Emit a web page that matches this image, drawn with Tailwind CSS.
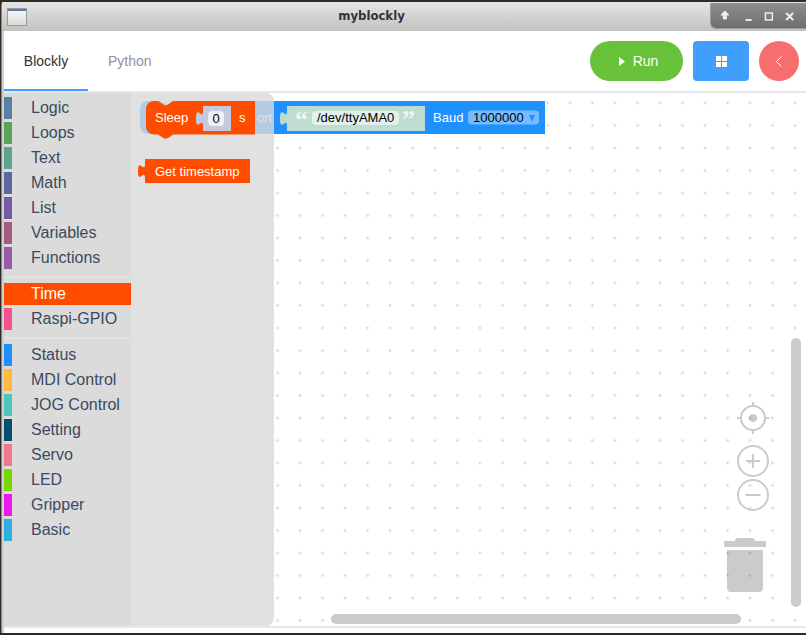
<!DOCTYPE html>
<html lang="en">
<head>
  <meta charset="UTF-8" />
  <title>myblockly</title>
  <script src="https://cdn.jsdelivr.net/npm/@tailwindcss/browser@4"></script>
</head>
<body class="w-[806px] h-[635px] overflow-hidden bg-[#2e2a26] font-['Liberation_Sans',sans-serif]">
  <div class="ml-[1px] mt-[2px] w-[805px] h-[631px] flex flex-col bg-[#d0d0d0] rounded-t-[4px] relative border-l border-[#888]">
    <!-- title bar -->
    <div class="h-[29px] shrink-0 flex items-center justify-center bg-gradient-to-b from-[#e4e4e4] to-[#c2c2c2] relative">
      <div class="absolute left-[5px] top-[6px] w-[20px] h-[18px] border border-[#9a9a9a] bg-gradient-to-b from-[#fafafa] to-[#dcdcd4]">
        <div class="h-[2px] bg-[#5a7aa8]"></div>
      </div>
      <span class="text-[11.7px] font-bold text-[#333] font-['DejaVu_Sans',sans-serif] ml-[-65px]">myblockly</span>
      <div class="absolute right-0 top-[1px] w-[96px] h-[26px] rounded-bl-[6px] bg-gradient-to-b from-[#8e8e8e] to-[#6e6e6e] border-l border-b border-[#9c9c9c] flex items-center justify-end text-white">
        <svg width="96" height="26" viewBox="0 0 96 26" fill="none" stroke="#eee" stroke-width="2">
          <path d="M14 8l-4 4h2.500v4h3v-4H18z" fill="#eee" stroke-width="1"/>
          <path d="M35 17h6"/>
          <rect x="55" y="10" width="7" height="7" stroke-width="1.500"/>
          <path d="M76 10l7 7M83 10l-7 7"/>
        </svg>
      </div>
    </div>
    <div class="flex-1 ml-[2px] mr-0 bg-white flex flex-col min-h-0">
      <!-- tabs and actions -->
      <div class="h-[60px] shrink-0 flex items-center relative">
        <div class="h-full w-[84px] pt-[2px] flex items-center justify-center text-sm text-[#303133] border-b-2 border-[#409eff]">Blockly</div>
        <div class="ml-[20px] text-sm text-[#909399]">Python</div>
        <div class="ml-auto mr-[7px] flex items-center gap-[10px]">
          <button class="w-[93px] h-[40px] pl-[4px] rounded-full bg-[#67c23a] text-white text-sm flex items-center justify-center gap-[8px]">
            <svg width="6" height="9" viewBox="0 0 6 9"><path d="M0 0l6 4.500-6 4.500z" fill="#fff"/></svg>
            Run
          </button>
          <button class="w-[56px] h-[40px] rounded-[4px] bg-[#409eff] flex items-center justify-center">
            <svg width="11" height="11" viewBox="0 0 11 11" fill="#fff"><rect width="5" height="5"/><rect x="6" width="5" height="5"/><rect y="6" width="5" height="5"/><rect x="6" y="6" width="5" height="5"/></svg>
          </button>
          <button class="w-[40px] h-[40px] rounded-full bg-[#f76e6e] flex items-center justify-center">
            <svg width="6" height="11" viewBox="0 0 6 11" fill="none" stroke="#fff"><path d="M5.500 .5l-5 5 5 5"/></svg>
          </button>
        </div>
      </div>
      <div class="h-[2px] shrink-0 bg-[#e4e7ed]"></div>
      <!-- editor -->
      <div class="flex-1 flex min-h-0 relative">
        <div class="w-[127px] shrink-0 bg-[#dbdbdb] pt-[2px] text-base text-[#3a4a60] relative z-10">
          <div class="h-[25px] flex items-center"><span class="w-[8px] h-[22px] bg-[#5b80a5]"></span><span class="ml-[19px]">Logic</span></div>
          <div class="h-[25px] flex items-center"><span class="w-[8px] h-[22px] bg-[#5ba55b]"></span><span class="ml-[19px]">Loops</span></div>
          <div class="h-[25px] flex items-center"><span class="w-[8px] h-[22px] bg-[#5ba58c]"></span><span class="ml-[19px]">Text</span></div>
          <div class="h-[25px] flex items-center"><span class="w-[8px] h-[22px] bg-[#5b67a5]"></span><span class="ml-[19px]">Math</span></div>
          <div class="h-[25px] flex items-center"><span class="w-[8px] h-[22px] bg-[#745ba5]"></span><span class="ml-[19px]">List</span></div>
          <div class="h-[25px] flex items-center"><span class="w-[8px] h-[22px] bg-[#a55b80]"></span><span class="ml-[19px]">Variables</span></div>
          <div class="h-[25px] flex items-center"><span class="w-[8px] h-[22px] bg-[#995ba5]"></span><span class="ml-[19px]">Functions</span></div>
          <div class="h-[11px] pt-[6px]"><div class="w-full h-[2px] bg-[#e3e3e3]"></div></div>
          <div class="h-[25px] flex items-center"><div class="w-full h-[22px] bg-[#ff4d00] text-white pl-[27px] leading-[22px]">Time</div></div>
          <div class="h-[25px] flex items-center"><span class="w-[8px] h-[22px] bg-[#f5528f]"></span><span class="ml-[19px]">Raspi-GPIO</span></div>
          <div class="h-[11px] pt-[6px]"><div class="w-full h-[2px] bg-[#e3e3e3]"></div></div>
          <div class="h-[25px] flex items-center"><span class="w-[8px] h-[22px] bg-[#1e90ff]"></span><span class="ml-[19px]">Status</span></div>
          <div class="h-[25px] flex items-center"><span class="w-[8px] h-[22px] bg-[#ffb940]"></span><span class="ml-[19px]">MDI Control</span></div>
          <div class="h-[25px] flex items-center"><span class="w-[8px] h-[22px] bg-[#4fc4b8]"></span><span class="ml-[19px]">JOG Control</span></div>
          <div class="h-[25px] flex items-center"><span class="w-[8px] h-[22px] bg-[#05506b]"></span><span class="ml-[19px]">Setting</span></div>
          <div class="h-[25px] flex items-center"><span class="w-[8px] h-[22px] bg-[#f0788a]"></span><span class="ml-[19px]">Servo</span></div>
          <div class="h-[25px] flex items-center"><span class="w-[8px] h-[22px] bg-[#77d800]"></span><span class="ml-[19px]">LED</span></div>
          <div class="h-[25px] flex items-center"><span class="w-[8px] h-[22px] bg-[#ee16ee]"></span><span class="ml-[19px]">Gripper</span></div>
          <div class="h-[25px] flex items-center"><span class="w-[8px] h-[22px] bg-[#2eaee2]"></span><span class="ml-[19px]">Basic</span></div>
        </div>
        <!-- workspace canvas: coordinates below are relative to x=131, y=93 -->
        <div class="flex-1 relative overflow-hidden">
          <svg class="absolute inset-0" width="675" height="534" font-family="Liberation Sans, sans-serif" font-size="13">
            <defs>
              <pattern id="grid" width="22.5" height="22.5" patternUnits="userSpaceOnUse" x="0" y="-1.5">
                <path d="M10 11.500h3M11.500 10v3" stroke="#d2d2d2" stroke-width="1"/>
              </pattern>
            </defs>
            <rect width="675" height="534" fill="url(#grid)"/>
            <!-- Port block -->
            <path d="M17 8h12l6 4 3 0 6-4h370v33H44l-6 4-3 0-6-4H17a8 8 0 0 1-8-8V16a8 8 0 0 1 8-8z" fill="#1e90ff"/>
            <text x="126" y="29" fill="#fff">ort</text>
            <rect x="156" y="13" width="138" height="25" fill="#bfdcd0"/>
            <path d="M156 18c0 10-7-7-7 7.500s7-2.500 7 7.500z" fill="#bfdcd0"/>
            <text x="164" y="35" fill="#eef7f3" font-size="26" font-weight="bold" font-family="Liberation Serif, serif">“</text>
            <rect x="181" y="18" width="87" height="14" rx="4" fill="#e4f0eb"/>
            <text x="186" y="29" fill="#000">/dev/ttyAMA0</text>
            <text x="271" y="35" fill="#eef7f3" font-size="26" font-weight="bold" font-family="Liberation Serif, serif">”</text>
            <text x="302" y="29" fill="#fff">Baud</text>
            <rect x="337" y="17.500" width="71" height="14" rx="4" fill="#78bcff"/>
            <text x="342" y="29" fill="#000">1000000</text>
            <path d="M398 22h6l-3 7z" fill="#1e90ff"/>
          </svg>
          <!-- flyout -->
          <div class="absolute left-0 top-0 w-[143px] h-full bg-[#d9d9d9]/80 rounded-r-[8px]"></div>
          <svg class="absolute inset-0" width="675" height="534" font-family="Liberation Sans, sans-serif" font-size="13">
            <path d="M23 8h4l6 4 3 0 6-4h82v33.500H42l-6 4-3 0-6-4h-4a8 8 0 0 1-8-8V16a8 8 0 0 1 8-8z" fill="#ff4d00"/>
            <text x="24" y="29" fill="#fff">Sleep</text>
            <rect x="72" y="13" width="28" height="25" fill="#c4c9dd"/>
            <path d="M72 18c0 10-7-7-7 7.500s7-2.500 7 7.500z" fill="#c4c9dd"/>
            <rect x="77" y="18" width="16" height="15" rx="4" fill="#eef0f6"/>
            <text x="81.500" y="30" fill="#000">0</text>
            <text x="108" y="29" fill="#fff">s</text>
            <rect x="14" y="66" width="105" height="24" fill="#ff4d00"/>
            <path d="M14 71c0 10-7-7-7 7s7-2.500 7 7z" fill="#ff4d00"/>
            <text x="24" y="83" fill="#fff">Get timestamp</text>
          </svg>
          <!-- zoom controls and trash, translucent so the grid shows through -->
          <svg class="absolute left-[590px] top-[300px] opacity-20" width="60" height="210" fill="none" stroke="#000" stroke-width="2">
            <circle cx="32" cy="25" r="12"/>
            <circle cx="32" cy="25" r="4" fill="#000" stroke="none"/>
            <path d="M32 9v4M32 37v4M16 25h4M44 25h4"/>
            <circle cx="32" cy="68" r="15"/>
            <path d="M25 68h14M32 61v14"/>
            <circle cx="32" cy="102" r="15"/>
            <path d="M24.500 102h15"/>
            <path d="M3 148h42v6H3z" fill="#000" stroke="none"/>
            <path d="M14 148c0-3 2-3 5-3h10c3 0 5 0 5 3z" fill="#000" stroke="none"/>
            <path d="M6 157h36v38a4 4 0 0 1-4 4H10a4 4 0 0 1-4-4z" fill="#000" stroke="none"/>
          </svg>
          <!-- scrollbars -->
          <div class="absolute left-[660px] top-[245px] w-[10px] h-[269px] rounded-full bg-[#ccc]"></div>
          <div class="absolute left-[200px] top-[521px] w-[410px] h-[10px] rounded-full bg-[#ccc]"></div>
        </div>
      </div>
      <div class="h-[2px] shrink-0 bg-[#e4e7ed]"></div>
      <div class="h-[5px] shrink-0 bg-white"></div>
    </div>
  </div>
</body>
</html>
